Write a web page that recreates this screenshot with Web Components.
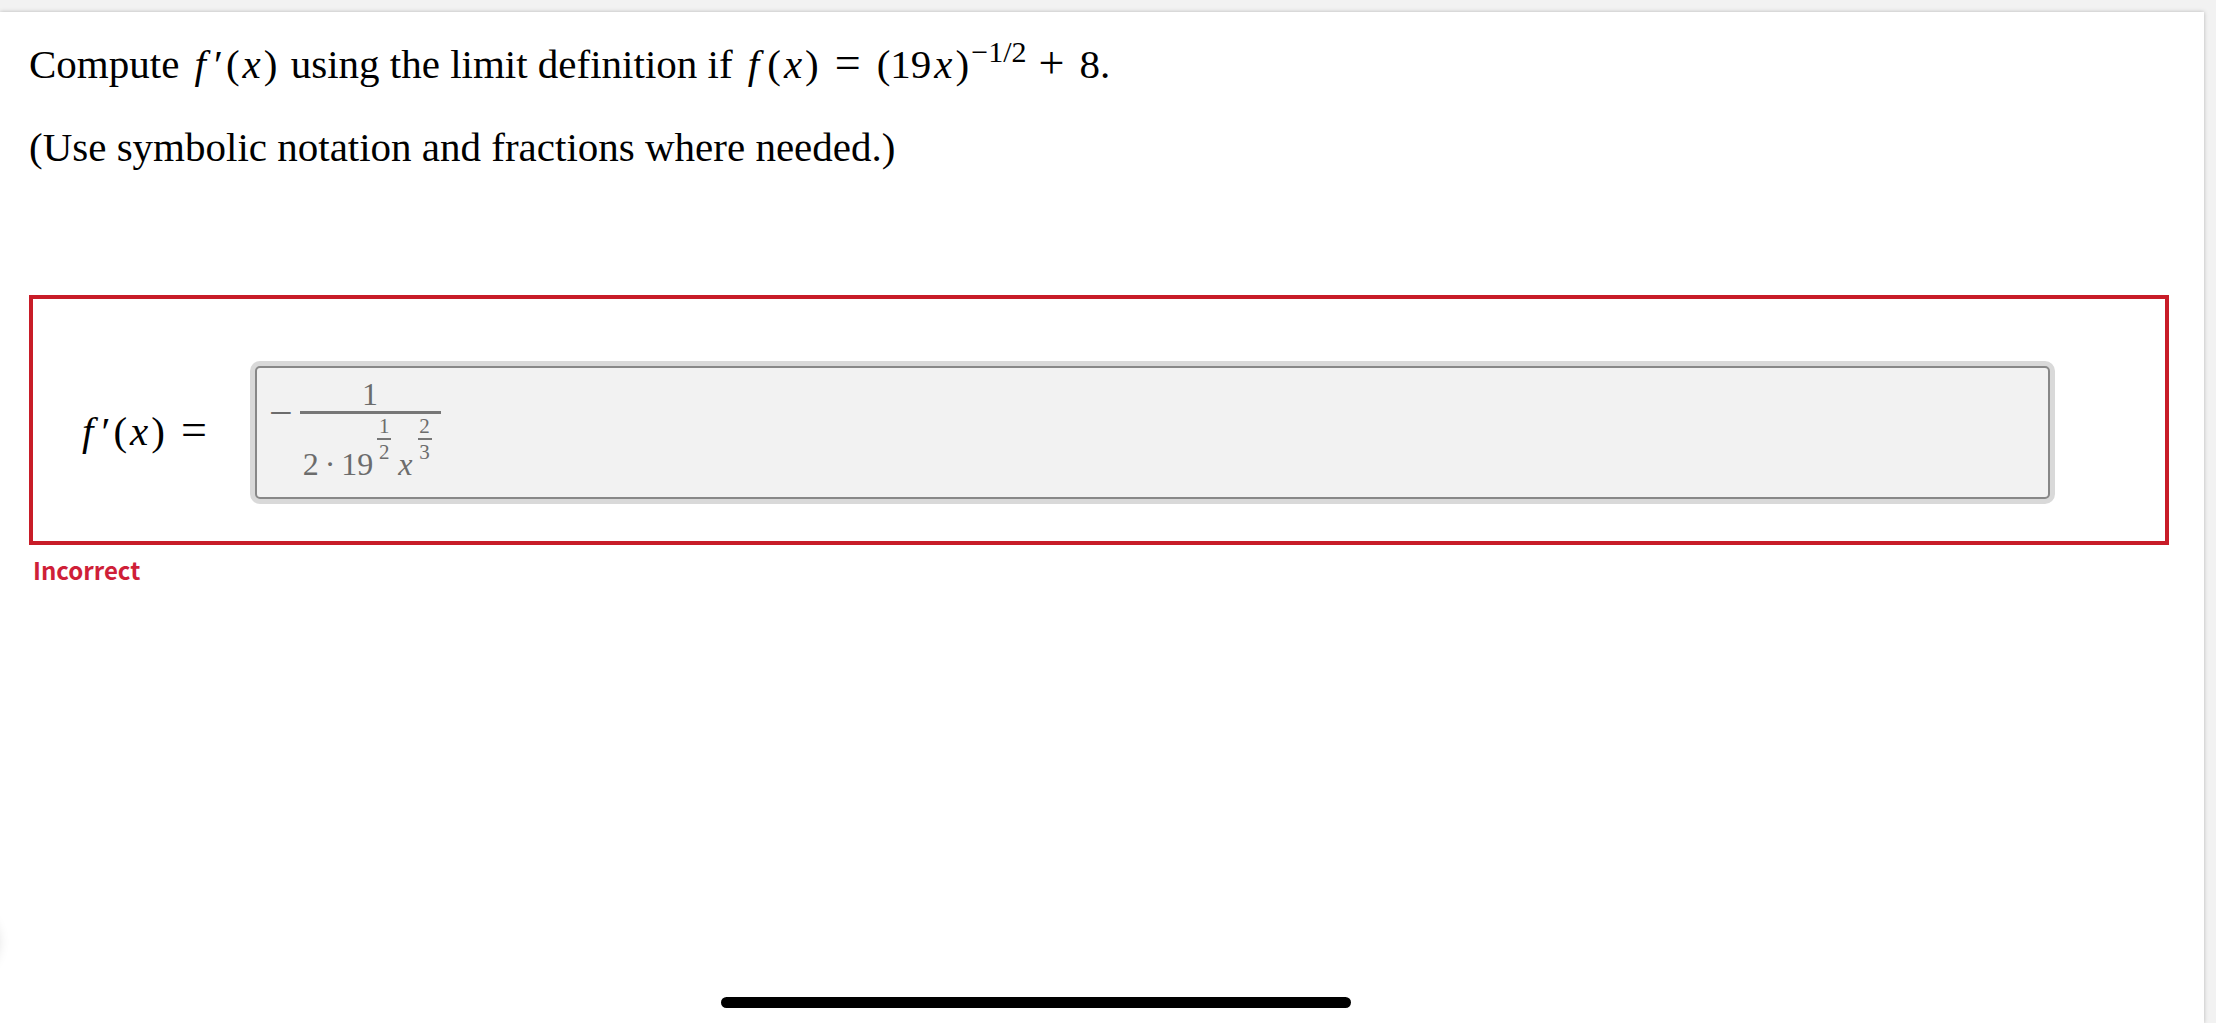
<!DOCTYPE html>
<html lang="en">
<head>
<meta charset="utf-8">
<title>Limit definition question</title>
<style>
  html, body { margin: 0; height: 100%; background: #f2f2f2; }
  body { font-family: "Liberation Serif", "Times New Roman", serif; color: #000; overflow: hidden; }
</style>
</head>
<body>
<question-page>
  <question-text>
    <p>Compute <math-run><i class="fn">f</i><span class="prime">′</span>(<i>x</i>)</math-run> using the limit definition if <math-run><i class="fn">f</i>(<i>x</i>)<span class="rel">=</span>(19<i>x</i>)<sup>−1/2</sup><span class="bin">+</span>8.</math-run></p>
    <p>(Use symbolic notation and fractions where needed.)</p>
  </question-text>
  <answer-box status="Incorrect"></answer-box>
</question-page>
<home-indicator></home-indicator>

<script>
class Base extends HTMLElement {
  constructor() {
    super();
    this.attachShadow({ mode: "open" }).innerHTML = this.constructor.markup;
  }
}

customElements.define("question-page", class extends Base {
  static markup = `<style>
    :host { display: flex; box-sizing: border-box; height: 100vh; padding: 12px 12px 0 0; }
    main { flex: 1; box-sizing: border-box; background: #fff; padding: 28px 35px 0 29px; box-shadow: 0 0 4px rgba(0,0,0,.25); }
    .side { position: absolute; left: -64px; top: 912px; width: 60px; height: 60px; border-radius: 30px; box-shadow: 0 0 14px rgba(0,0,0,.2); }
  </style><main><slot></slot></main><div class="side"></div>`;
});

customElements.define("question-text", class extends Base {
  static markup = `<style>
    :host { display: flex; flex-direction: column; gap: 35px; font-size: 41px; line-height: 48px; }
    ::slotted(p) { margin: 0; }
  </style><slot></slot>`;
});

/* Inline mathematics: copies its content into the shadow root so the notation can be styled there. */
customElements.define("math-run", class extends HTMLElement {
  connectedCallback() {
    if (this.shadowRoot) return;
    const root = this.attachShadow({ mode: "open" });
    root.innerHTML = `<style>
      :host { display: inline; margin-right: 3px; white-space: nowrap; }
      i { margin: 0 3px; }
      .fn { margin: 0 8px 0 5px; }
      .prime { margin-right: 3px; }
      .rel, .bin { font-size: 46px; line-height: 0; }
      .rel { margin: 0 16px; }
      .bin { margin: 0 15px 0 12px; }
      sup { font-size: 30px; line-height: 0; vertical-align: 16px; margin-left: 2px; }
    </style>`;
    root.append(...[...this.childNodes].map(n => n.cloneNode(true)));
    this.replaceChildren();
  }
});

customElements.define("math-fraction", class extends Base {
  static markup = `<style>
    :host { display: inline-flex; flex-direction: column; align-items: center; }
    .bar { align-self: stretch; height: 3px; margin: 1px 0 2px; background: #777; }
    :host([small]) { font-size: 21px; line-height: 20px; }
    :host([small]) .bar { height: 2px; margin: 2px 0; }
    .den { display: flex; align-items: flex-end; }
  </style><slot name="num"></slot><div class="bar"></div><div class="den"><slot name="den"></slot></div>`;
});

customElements.define("answer-box", class extends Base {
  static markup = `<style>
    :host { display: block; margin-top: 124px; }
    .frame { display: flex; align-items: center; border: 4px solid #c81c28; padding: 62px 110px 37px 44px; }
    label { width: 173px; flex: none; padding-bottom: 4px; font-size: 41px; line-height: 48px; white-space: nowrap; }
    output { flex: 1; border: 5px solid #d9d9d9; border-radius: 10px; background: #d9d9d9; }
    .field { display: flex; align-items: flex-start; border: 2px solid #888; border-radius: 5px; background: #f2f2f2; padding: 10px 12px 17px; font-size: 32px; line-height: 32px; color: #6c6c6c; }
    .minus { margin: 19px 7px 0 0; font-size: 42px; }
    .den { display: flex; align-items: flex-end; padding: 0 9px 0 3px; }
    .dot { margin: 0 6px; }
    .den math-fraction { margin-bottom: 18px; width: 14px; }
    .e1 { margin: 0 7px 0 4px; }
    .e2 { margin-left: 5px; }
    .status { margin: 7px 0 0 4px; font: 700 24px/36px "Noto Sans CJK SC", "Noto Sans", sans-serif; color: #cf1f38; }
  </style>
  <div class="frame">
    <label for="answer"><math-run><i class="fn">f</i><span class="prime">′</span>(<i>x</i>)<span class="rel">=</span></math-run></label>
    <output id="answer"><div class="field">
      <span class="minus">−</span>
      <math-fraction>
        <span slot="num">1</span>
        <div class="den" slot="den"><span>2</span><span class="dot">·</span><span>19</span><math-fraction small class="e1"><span slot="num">1</span><span slot="den">2</span></math-fraction><i>x</i><math-fraction small class="e2"><span slot="num">2</span><span slot="den">3</span></math-fraction></div>
      </math-fraction>
    </div></output>
  </div>
  <div class="status" role="status"></div>`;
  connectedCallback() {
    this.shadowRoot.querySelector(".status").textContent = this.getAttribute("status");
  }
});

customElements.define("home-indicator", class extends Base {
  static markup = `<style>
    :host { position: fixed; left: 721px; bottom: 15px; width: 630px; height: 11px; border-radius: 6px; background: #000; }
  </style>`;
});
</script>
</body>
</html>
